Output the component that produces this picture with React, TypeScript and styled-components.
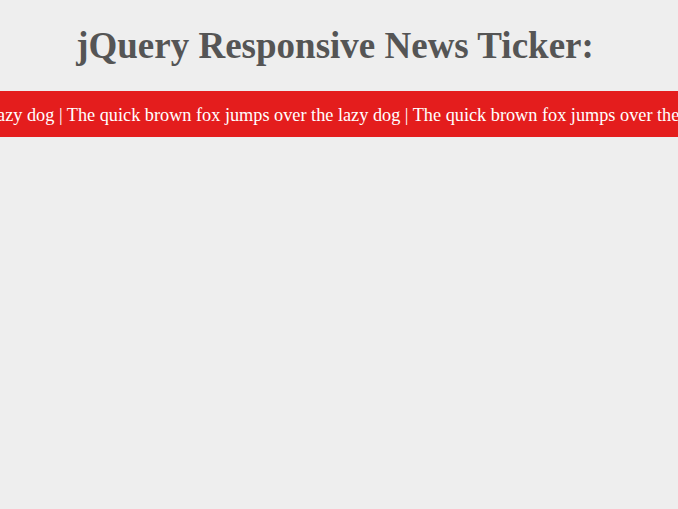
import styled, { createGlobalStyle } from "styled-components";

const GlobalStyle = createGlobalStyle`
  html, body {
    margin: 0;
    padding: 0;
    background: #eeeeee;
  }
  body {
    font-family: "Liberation Serif", "Times New Roman", serif;
  }
`;

const Page = styled.div`
  min-height: 509px;
  overflow: hidden;
`;

const Heading = styled.h1`
  margin: 0;
  padding: 24px 8px 0 0;
  text-align: center;
  font-size: 37px;
  font-weight: bold;
  line-height: 44px;
  color: #555555;
`;

const TickerBar = styled.div`
  margin-top: 23px;
  height: 46px;
  background: #e41d1d;
  overflow: hidden;
  display: flex;
  align-items: center;
`;

const TickerTrack = styled.div`
  white-space: nowrap;
  color: #ffffff;
  font-size: 18.25px;
  padding-top: 2px;
  transform: translateX(-8px);
`;

const headline = "The quick brown fox jumps over the lazy dog";

const App = () => {
  const items = Array.from({ length: 4 }, () => headline);
  return (
    <Page>
      <GlobalStyle />
      <Heading>jQuery Responsive News Ticker:</Heading>
      <TickerBar>
        <TickerTrack>{"lazy dog | " + items.join(" | ")}</TickerTrack>
      </TickerBar>
    </Page>
  );
};

export default App;
